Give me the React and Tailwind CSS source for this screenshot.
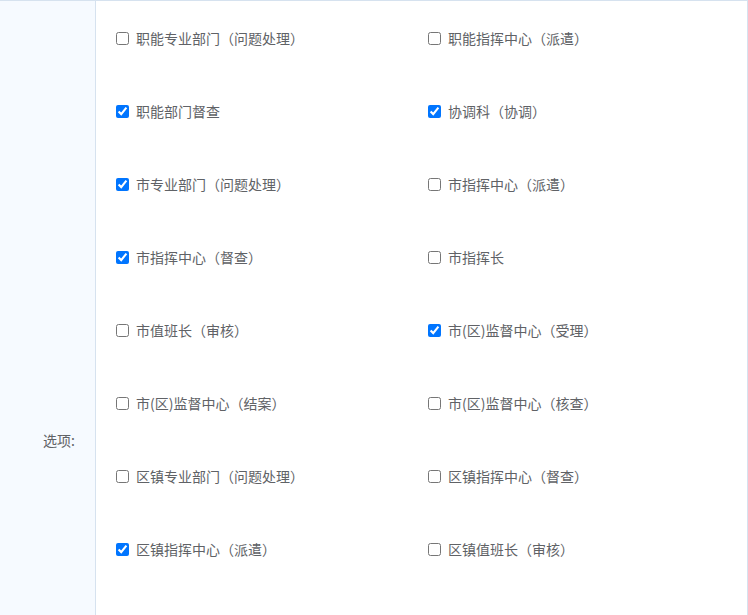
import { useState } from "react";

const OPTIONS = [
  ["职能专业部门（问题处理）", false],
  ["职能指挥中心（派遣）", false],
  ["职能部门督查", true],
  ["协调科（协调）", true],
  ["市专业部门（问题处理）", true],
  ["市指挥中心（派遣）", false],
  ["市指挥中心（督查）", true],
  ["市指挥长", false],
  ["市值班长（审核）", false],
  ["市(区)监督中心（受理）", true],
  ["市(区)监督中心（结案）", false],
  ["市(区)监督中心（核查）", false],
  ["区镇专业部门（问题处理）", false],
  ["区镇指挥中心（督查）", false],
  ["区镇指挥中心（派遣）", true],
  ["区镇值班长（审核）", false],
];

export default function App() {
  const [checked, setChecked] = useState(OPTIONS.map((o) => o[1]));

  return (
    <div
      className="w-[748px] flex border-t border-r border-[#d6e2ef] bg-white text-[14px] text-[#606266]"
      style={{ fontFamily: '"Noto Sans CJK SC", "Microsoft YaHei", sans-serif' }}
    >
      {/* label cell */}
      <div className="w-[96px] shrink-0 flex items-center justify-end pr-[20px] bg-[#f6faff] border-r border-[#d6e2ef]">
        <span>选项:</span>
      </div>

      <div className="flex-1 h-[879px] pt-[1px] pl-[20px] grid grid-cols-[312px_1fr] auto-rows-[73px] content-start">
        {OPTIONS.map(([label], i) => (
          <label key={label} className="flex items-center gap-[7px] cursor-pointer leading-none">
            <input
              type="checkbox"
              checked={checked[i]}
              onChange={() =>
                setChecked((c) => c.map((v, j) => (j === i ? !v : v)))
              }
              className="w-[13px] h-[13px]"
            />
            <span className="-mt-[2px]">{label}</span>
          </label>
        ))}
      </div>
    </div>
  );
}
